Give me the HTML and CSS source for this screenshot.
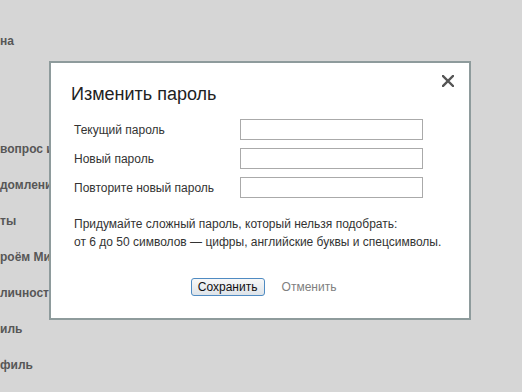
FILE: index.html
```html
<!DOCTYPE html>
<html lang="ru">
<head>
  <meta charset="utf-8">
  <title>Изменить пароль</title>
  <link rel="stylesheet" href="styles.css">
</head>
<body>
  <ul class="side-menu">
    <li>на</li>
    <li></li>
    <li></li>
    <li>вопрос и ответ</li>
    <li>домления</li>
    <li>ты</li>
    <li>роём Мире</li>
    <li>личности</li>
    <li>иль</li>
    <li>филь</li>
  </ul>

  <div class="dialog">
    <button type="button" class="dialog-close" aria-label="Закрыть">
      <svg width="12" height="12" viewBox="0 0 12 12">
        <path d="M1 1 L11 11 M11 1 L1 11" stroke="#555" stroke-width="2.4" stroke-linecap="square"/>
      </svg>
    </button>
    <h2 class="dialog-title">Изменить пароль</h2>
    <form class="pass-form">
      <div class="form-row">
        <label for="current">Текущий пароль</label>
        <input type="password" id="current">
      </div>
      <div class="form-row">
        <label for="newpass">Новый пароль</label>
        <input type="password" id="newpass">
      </div>
      <div class="form-row">
        <label for="repeat">Повторите новый пароль</label>
        <input type="password" id="repeat">
      </div>
      <p class="hint">Придумайте сложный пароль, который нельзя подобрать:<br>от 6 до 50 символов — цифры, английские буквы и спецсимволы.</p>
      <div class="actions">
        <button type="submit" class="btn-save">Сохранить</button>
        <a href="#" class="btn-cancel">Отменить</a>
      </div>
    </form>
  </div>
</body>
</html>
```

FILE: styles.css
```css
body {
  margin: 0;
  background-color: #d6d6d6;
  font-family: "Liberation Sans", Arial, sans-serif;
  font-size: 12px;
  color: #333;
  height: 392px;
  overflow: hidden;
  position: relative;
}
.side-menu {
  list-style: none;
  margin: 0;
  padding: 23px 0 0 0;
  overflow: hidden;
}
.side-menu li {
  height: 36px;
  line-height: 36px;
  font-weight: bold;
  color: #575757;
  white-space: nowrap;
}
.dialog {
  position: absolute;
  left: 49px;
  top: 61px;
  width: 378px;
  background-color: #ffffff;
  border: 2px solid #8e9b9c;
  padding: 20px 20px 22px 20px;
}
.dialog-close {
  position: absolute;
  top: 12px;
  right: 15px;
  background: none;
  border: none;
  padding: 0;
  width: 12px;
  height: 12px;
  cursor: pointer;
}
.dialog-close svg {
  display: block;
}
.dialog-title {
  margin: 0 0 14px 0;
  font-size: 18px;
  line-height: 22px;
  font-weight: normal;
  color: #222;
}
.pass-form {
  padding-left: 3px;
}
.form-row {
  display: flex;
  align-items: center;
  height: 21px;
  margin-bottom: 8px;
}
.form-row label {
  width: 166px;
  color: #333;
}
.form-row input {
  width: 183px;
  height: 21px;
  padding: 0 2px;
  margin: 0;
  border: 1px solid #aaaaaa;
  box-sizing: border-box;
}
.hint {
  margin: 17px 0 0 0;
  line-height: 18px;
  color: #333;
}
.actions {
  display: flex;
  justify-content: center;
  align-items: center;
  gap: 17px;
  margin-top: 27px;
  padding-left: 4px;
}
.btn-save {
  font-family: "Liberation Sans", Arial, sans-serif;
  font-size: 12px;
  color: #111;
  height: 18px;
  width: 74px;
  padding: 0;
  border: 1px solid #4f8bc2;
  border-radius: 3px;
  background: linear-gradient(#f8f8f8, #dde3e9);
  cursor: pointer;
}
.btn-cancel {
  color: #808080;
  text-decoration: none;
}
```
